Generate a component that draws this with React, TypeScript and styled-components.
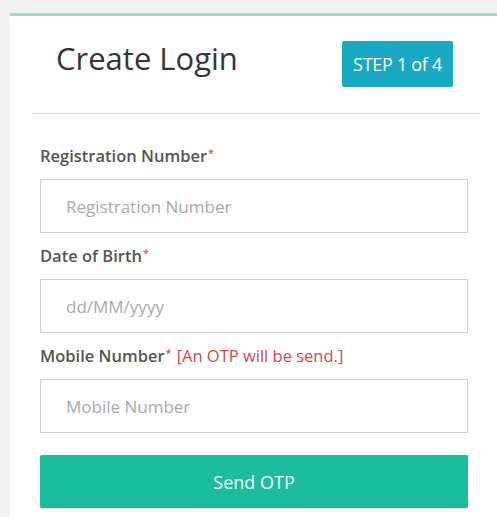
import React from 'react';
import styled, { createGlobalStyle } from 'styled-components';

// -------------------------------------------------------
// CreateLogin - step 1 of the registration wizard
// -------------------------------------------------------

const GlobalStyle = createGlobalStyle`
  html, body {
    margin: 0;
    padding: 0;
    background: #f3f1f1;
    font-family: "Open Sans", "Noto Sans", sans-serif;
  }
  * { box-sizing: border-box; }
`;

const Page = styled.div`
  padding: 13px 0 0 10px;
  min-height: 517px;
  overflow: hidden;
`;

const Card = styled.div`
  width: 500px;
  min-height: 504px;
  background: #fff;
  border-top: 3px solid #a3d9c6;
`;

const Header = styled.div`
  display: flex;
  justify-content: space-between;
  align-items: flex-start;
  margin: 0 30px 0 22px;
  padding: 25px 27px 26px 24px;
  border-bottom: 1px solid #dedede;
`;

const Title = styled.h2`
  margin: 0;
  font-size: 31px;
  line-height: 34px;
  font-weight: 400;
  color: #363636;
`;

const StepBadge = styled.div`
  width: 111px;
  height: 46px;
  display: flex;
  align-items: center;
  justify-content: center;
  background: #19a8c2;
  border-radius: 2px;
  color: #fff;
  font-size: 18px;
  letter-spacing: -0.3px;
`;

const Form = styled.form`
  width: 428px;
  margin-left: 30px;
  padding-top: 32px;
  display: flex;
  flex-direction: column;
`;

const Label = styled.label`
  display: block;
  font-size: 16.5px;
  line-height: 20px;
  font-weight: 600;
  color: #555;
  margin-bottom: 13px;
`;

const Required = styled.sup`
  color: #d9534f;
  font-size: 11px;
  margin-left: 1px;
  vertical-align: top;
  position: relative;
  top: -3px;
`;

const Hint = styled.span`
  color: #d0494a;
  font-weight: 400;
  margin-left: 5px;
`;

const Input = styled.input`
  width: 100%;
  height: 54px;
  margin-bottom: 13px;
  padding: 0 25px;
  border: 1px solid #cfcfcf;
  border-radius: 0;
  background: #fff;
  font-family: inherit;
  font-size: 17px;
  color: #333;
  &::placeholder { color: #a9a9a9; }
  &:focus { outline: none; border-color: #1abc9c; }
`;

const SubmitButton = styled.button`
  margin-top: 9px;
  width: 100%;
  height: 53px;
  border: none;
  border-radius: 2px;
  background: #1abc9c;
  color: #fff;
  font-family: inherit;
  font-size: 18px;
  cursor: pointer;
  box-shadow: 0 1px 1px rgba(0, 0, 0, 0.15);
`;

// -------------------------------------------------------
const App: React.FC = () => {
  return (
    <Page>
      <GlobalStyle />
      <Card>
        <Header>
          <Title>Create Login</Title>
          <StepBadge>STEP 1 of 4</StepBadge>
        </Header>

        <Form onSubmit={(e) => e.preventDefault()}>
          <Label>
            Registration Number<Required>*</Required>
          </Label>
          <Input placeholder="Registration Number" />

          <Label>
            Date of Birth<Required>*</Required>
          </Label>
          <Input placeholder="dd/MM/yyyy" />

          <Label>
            Mobile Number<Required>*</Required>
            <Hint>[An OTP will be send.]</Hint>
          </Label>
          <Input placeholder="Mobile Number" />

          <SubmitButton type="submit">Send OTP</SubmitButton>
        </Form>
      </Card>
    </Page>
  );
};

export default App;
